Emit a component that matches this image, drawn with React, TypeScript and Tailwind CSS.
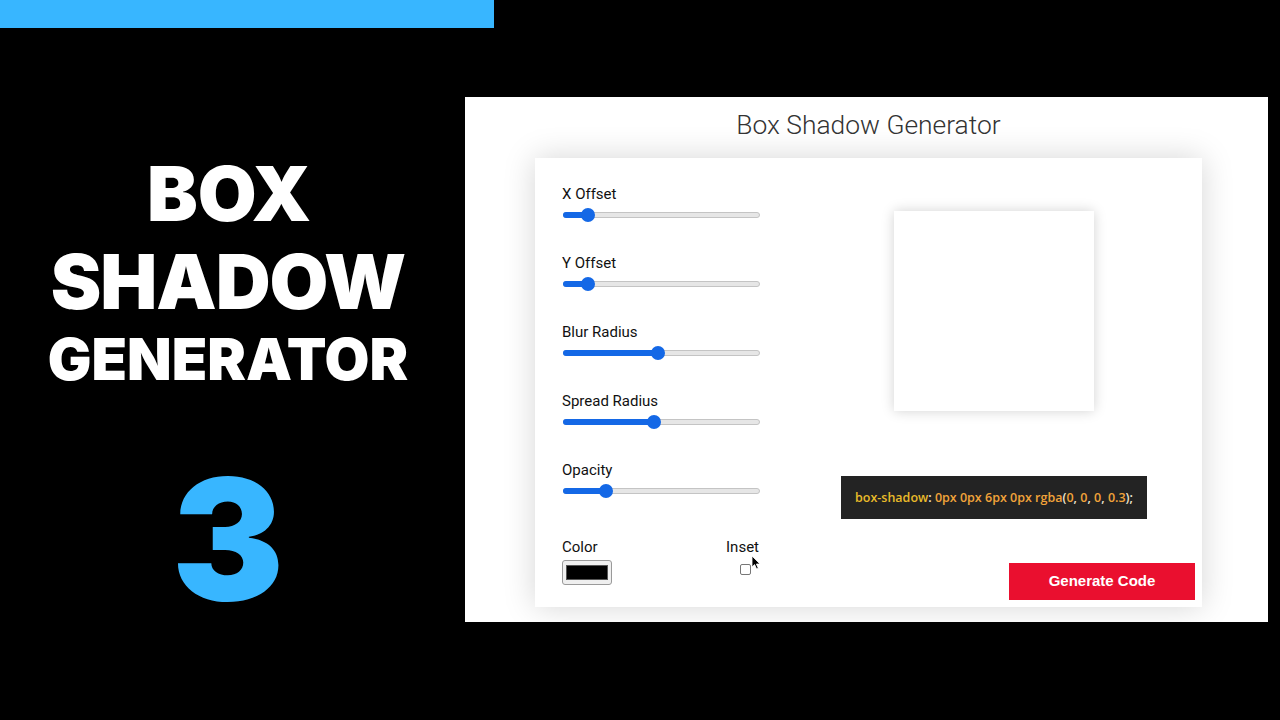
import React from "react";

const sliders = [
  { label: "X Offset", pos: 25 },
  { label: "Y Offset", pos: 25 },
  { label: "Blur Radius", pos: 95 },
  { label: "Spread Radius", pos: 91 },
  { label: "Opacity", pos: 43 },
];

function Slider({ pos }: { pos: number }) {
  return (
    <div className="relative ml-[1px] mt-[5px] h-[14px] w-[197px]">
      <div className="absolute left-0 right-0 top-[4px] h-[6px] rounded-full border border-[#c4c4c4] bg-[#e6e6e6]" />
      <div className="absolute left-0 top-[4px] h-[6px] rounded-full bg-[#1468e6]" style={{ width: pos }} />
      <div
        className="absolute top-[0px] h-[14px] w-[14px] rounded-full bg-[#1468e6]"
        style={{ left: pos - 7 }}
      />
    </div>
  );
}

function CodeLine() {
  const light = "text-[#efe6cf]";
  const num = "text-[#f2a33a]";
  return (
    <div className="flex h-[43px] w-[306px] items-center justify-center bg-[#232323] pt-[1px] font-['Open_Sans',sans-serif] text-[12.5px] font-semibold">
      <span className="text-[#e9bb2a]">box-shadow</span>
      <span className={light}>:&nbsp;</span>
      <span className={num}>0px 0px 6px 0px rgba</span>
      <span className={light}>(</span>
      <span className={num}>0</span>
      <span className={light}>,&nbsp;</span>
      <span className={num}>0</span>
      <span className={light}>,&nbsp;</span>
      <span className={num}>0</span>
      <span className={light}>,&nbsp;</span>
      <span className={num}>0.3</span>
      <span className={light}>);</span>
    </div>
  );
}

export default function App() {
  return (
    <div className="h-[720px] w-[1280px] overflow-hidden bg-black">
      <div className="h-[28px] w-[494px] bg-[#38b6ff]" />
      <div className="flex">
        {/* left title */}
        <div className="flex w-[456px] flex-col items-center font-['Inter',sans-serif] font-black text-white">
          <div className="ml-[2px] mt-[127px] text-[76px] leading-[76px]">BOX</div>
          <div className="mt-[12px] text-[76px] leading-[76px] tracking-[-1px]">SHADOW</div>
          <div className="mt-[11px] text-[58px] leading-[58px]">GENERATOR</div>
          <div className="mt-[67px] text-[168px] leading-[168px] text-[#38b6ff]">3</div>
        </div>

        {/* app screenshot */}
        <div className="ml-[9px] mt-[69px] h-[525px] w-[803px] bg-white">
          <div className="pl-[4px] pt-[12px] text-center font-['Roboto',sans-serif] text-[26.4px] font-light leading-[32px] text-[#333]">
            Box Shadow Generator
          </div>
          <div className="ml-[70px] mt-[17px] flex h-[449px] w-[667px] bg-white shadow-[0_0_30px_rgba(0,0,0,0.17)]">
            <div className="w-[251px] pl-[27px] pt-[27px] font-['Roboto',sans-serif] text-[15px] text-[#111]">
              {sliders.map((s, i) => (
                <div key={s.label} className={i > 0 ? "mt-[32px]" : ""}>
                  <div className="leading-[18px]">{s.label}</div>
                  <Slider pos={s.pos} />
                </div>
              ))}
              <div className="mt-[40px] flex w-[197px] justify-between">
                <div>
                  <div className="leading-[18px]">Color</div>
                  <div className="mt-[4px] flex h-[25px] w-[50px] items-center justify-center rounded-[3px] border border-[#9a9a9a] bg-[#efefef]">
                    <div className="h-[15px] w-[42px] border border-[#555] bg-black" />
                  </div>
                </div>
                <div className="relative flex flex-col items-end">
                  <div className="leading-[18px]">Inset</div>
                  <div className="mr-[8px] mt-[8px] h-[11px] w-[11px] rounded-[2px] border border-[#777] bg-white" />
                  <svg
                    className="absolute left-[25px] top-[17px]"
                    width="10"
                    height="15"
                    viewBox="0 0 10 15"
                  >
                    <path d="M1 1 L1 12 L3.6 9.6 L5.6 14 L7.3 13.2 L5.4 9 L9 9 Z" fill="#000" stroke="#fff" strokeWidth="0.8" />
                  </svg>
                </div>
              </div>
            </div>
            <div className="flex flex-1 flex-col items-center">
              <div className="mt-[53px] h-[200px] w-[200px] bg-white shadow-[0_0_12px_rgba(0,0,0,0.18)]" />
              <div className="mt-[65px]">
                <CodeLine />
              </div>
              <button className="mr-[7px] mt-[44px] flex h-[37px] w-[186px] items-center justify-center self-end bg-[#ea0f2f] font-['Liberation_Sans',sans-serif] text-[15px] font-bold text-white">
                Generate Code
              </button>
            </div>
          </div>
        </div>
      </div>
    </div>
  );
}
